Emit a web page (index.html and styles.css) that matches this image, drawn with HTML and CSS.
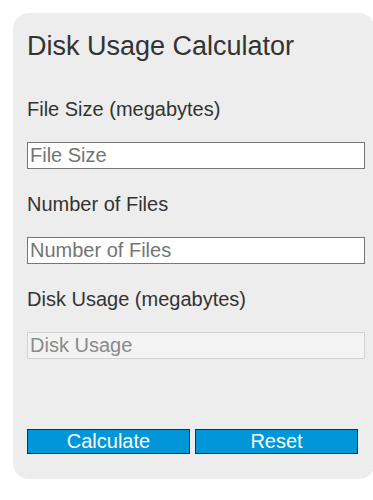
FILE: index.html
```html
<!DOCTYPE html>
<html>
<head>
<meta charset="utf-8">
<link rel="stylesheet" href="styles.css">
</head>
<body>
<div class="card">
  <h1 class="title">Disk Usage Calculator</h1>
  <div class="fields">
    <div class="field">
      <label class="label">File Size (megabytes)</label>
      <input class="input" type="text" placeholder="File Size">
    </div>
    <div class="field">
      <label class="label">Number of Files</label>
      <input class="input" type="text" placeholder="Number of Files">
    </div>
    <div class="field">
      <label class="label">Disk Usage (megabytes)</label>
      <input class="input input-disabled" type="text" placeholder="Disk Usage" disabled>
    </div>
  </div>
  <div class="actions">
    <button class="btn">Calculate</button>
    <button class="btn">Reset</button>
  </div>
</div>
</body>
</html>
```
FILE: styles.css
```css
html, body {
  margin: 0;
  padding: 0;
  background: #ffffff;
  overflow: hidden;
}
body {
  font-family: "Liberation Sans", Arial, sans-serif;
  color: #333333;
}
.card {
  box-sizing: border-box;
  margin: 13px 0 0 13px;
  width: 362px;
  background: #ededed;
  border-radius: 16px;
  padding: 18px 14px 25px 14px;
  display: flex;
  flex-direction: column;
}
.title {
  margin: 0 0 37px 0;
  font-size: 27px;
  line-height: 30px;
  font-weight: normal;
  color: #333333;
}
.fields {
  display: flex;
  flex-direction: column;
  gap: 24px;
}
.field {
  display: flex;
  flex-direction: column;
}
.label {
  font-size: 20px;
  line-height: 22px;
  margin-bottom: 22px;
  color: #333333;
}
.input {
  box-sizing: border-box;
  width: 338px;
  height: 27px;
  margin: 0;
  padding: 0 2px;
  border: 1px solid #767676;
  background: #ffffff;
  font-family: "Liberation Sans", Arial, sans-serif;
  font-size: 20px;
  color: #333333;
  outline: none;
}
.input::placeholder {
  color: #757575;
}
.input-disabled {
  background: #f3f3f3;
  border-color: #d3d3d3;
}
.input-disabled::placeholder {
  color: #8a8a8a;
}
.actions {
  margin-top: 70px;
  display: flex;
  gap: 5px;
}
.btn {
  box-sizing: border-box;
  width: 163px;
  height: 25px;
  margin: 0;
  padding: 0;
  background: #0096d8;
  border: 1px solid #2a2a2a;
  color: #ffffff;
  font-family: "Liberation Sans", Arial, sans-serif;
  font-size: 20px;
  line-height: 23px;
}
```
